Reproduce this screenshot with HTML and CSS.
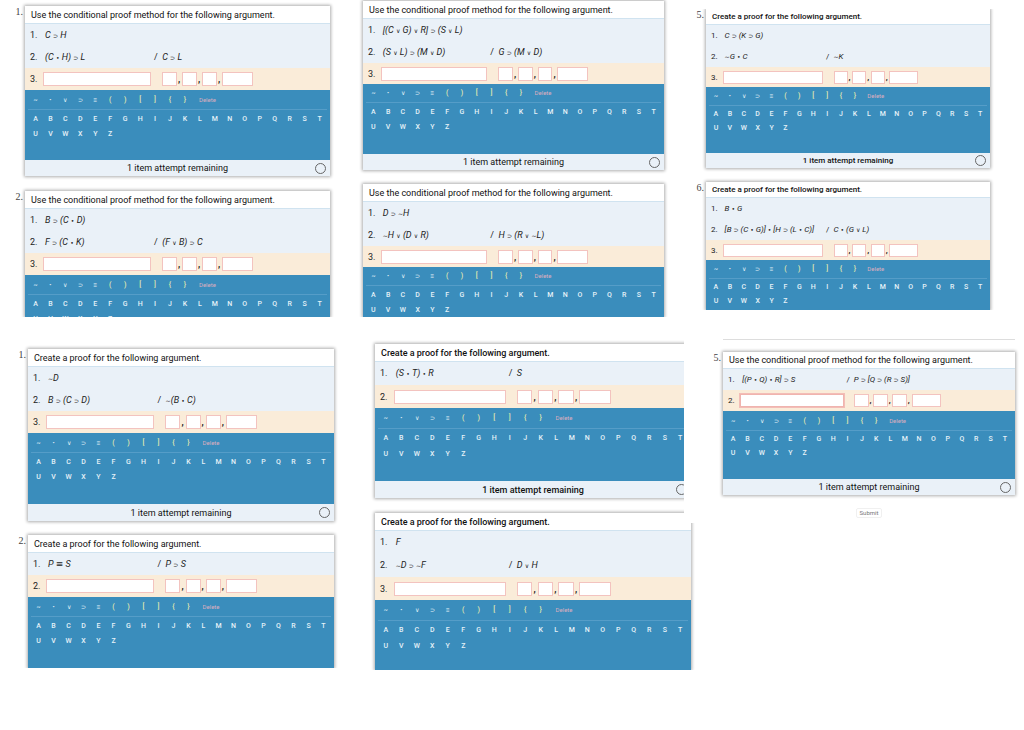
FILE: index.html
```html
<!DOCTYPE html>
<html lang="en">
<head>
    <meta charset="UTF-8">
    <meta name="viewport" content="width=device-width, initial-scale=1.0">
    <title>Natural Deduction Exercises</title>
    <link rel="stylesheet" href="styles.css">
</head>
<body>
    <section class="sheet sheet-top">
        <div class="column size-m col-a" data-column="a"></div>
        <div class="column size-m col-b" data-column="b"></div>
        <div class="column size-s col-c" data-column="c"></div>
    </section>

    <section class="sheet sheet-bottom">
        <div class="column size-m col-d" data-column="d"></div>
        <div class="column size-l col-e" data-column="e"></div>
        <div class="column size-n col-f" data-column="f">
            <div class="card-edge"></div>
        </div>
    </section>

    <script src="script.js"></script>
</body>
</html>
```

FILE: styles.css
```css
* {
    box-sizing: border-box;
}
body {
    margin: 0;
    background-color: #fff;
    color: #222;
    font-family: Roboto, "Liberation Sans", sans-serif;
    overflow-x: hidden;
}
button,
input {
    margin: 0;
    padding: 0;
    font-family: inherit;
}

/* Sheets and columns */
.sheet {
    display: grid;
    align-items: start;
}
.sheet-top {
    grid-template-columns: 330fr 334fr 326fr 34fr;
    padding-top: 1px;
}
.sheet-bottom {
    grid-template-columns: 334fr 357fr 324fr 9fr;
    margin-top: 22px;
}
.column {
    display: flex;
    flex-direction: column;
    gap: 14px;
    min-width: 0;
}
.size-s {
    --text: 8px;
    --title: 8px;
    --weight: 500;
    --head: 16px;
    --row: 21px;
    --entry: 20px;
    --field: 13px;
    --symbols: 19px;
    --key: 14px;
    --keypad: 66px;
    --foot: 15px;
}
.size-n {
    --text: 8px;
    --title: 9px;
    --weight: 400;
    --head: 17px;
    --row: 21px;
    --entry: 21px;
    --field: 13px;
    --symbols: 20px;
    --key: 14px;
    --keypad: 68px;
    --foot: 16px;
}
.size-m {
    --text: 9px;
    --title: 9px;
    --weight: 400;
    --head: 18px;
    --row: 22px;
    --entry: 22px;
    --field: 14px;
    --symbols: 20px;
    --key: 15px;
    --keypad: 70px;
    --foot: 16px;
}
.size-l {
    --text: 9px;
    --title: 9px;
    --weight: 500;
    --head: 18px;
    --row: 23px;
    --entry: 23px;
    --field: 14px;
    --symbols: 21px;
    --key: 16px;
    --keypad: 73px;
    --foot: 17px;
}
.col-a {
    --label: 25px;
    padding-top: 5px;
    gap: 15px;
}
.col-b {
    --label: 33px;
    --entry: 21px;
    --symbols: 19px;
}
.col-c {
    --label: 42px;
    padding-top: 8px;
}
.col-d {
    --label: 28px;
    --keypad: 71px;
    --foot: 17px;
    padding-top: 10px;
}
.col-e {
    --label: 41px;
    padding-top: 5px;
    gap: 15px;
}
.col-f {
    --label: 32px;
    gap: 12px;
}

/* Problem */
.problem {
    display: grid;
    grid-template-columns: var(--label) minmax(0, 1fr);
}
.label {
    padding-right: 2px;
    text-align: right;
    font: 10px/12px "Liberation Serif", serif;
    color: #444;
}
.card {
    box-shadow: 0 0 3px 1px rgba(0, 0, 0, 0.32);
    font-size: var(--text);
    background-color: #eaf1f8;
}
.card-title {
    height: var(--head);
    margin: 0;
    padding-left: 6px;
    border-bottom: 1px solid #d0e3f0;
    background-color: #fff;
    color: #111;
    font-size: var(--title);
    font-weight: var(--weight);
    line-height: var(--head);
    white-space: nowrap;
}
.card-edge {
    height: 1px;
    margin-left: var(--label);
    background-color: #ddd;
}

/* Proof lines */
.lines {
    margin: 0;
    padding: 0;
    list-style: none;
}
.line {
    display: grid;
    grid-template-columns: 20fr 109fr 176fr;
    height: var(--row);
    line-height: var(--row);
    white-space: nowrap;
}
.line > * {
    min-width: 0;
}
.number {
    padding-left: 5px;
}
.op {
    font-family: "DejaVu Sans", sans-serif;
    font-size: 6px;
}
.op-equiv {
    font-size: 9px;
}
.entry {
    display: grid;
    grid-template-columns: 18fr 108fr 11fr 15fr 5fr 15fr 5fr 15fr 5fr 31fr 77fr;
    align-items: center;
    height: var(--entry);
    background-color: #faecd9;
}
.entry > * {
    min-width: 0;
}
.field {
    width: 100%;
    height: var(--field);
    border: 1px solid #f3c3bf;
    border-radius: 0;
    background-color: #fff;
    font-size: var(--text);
    outline: none;
}
.field.active {
    border-color: #f0b4ae;
    box-shadow: 0 0 0 1px #f3bdb7;
}
.field.first {
    grid-column: 4;
}
.comma {
    padding-left: 1px;
    font-weight: 700;
}

/* Keypad */
.keypad {
    height: var(--keypad);
    padding: 0 3px;
    background-color: #3a8dbc;
}
.keys {
    display: grid;
    grid-template-columns: repeat(20, minmax(0, 1fr));
    grid-auto-rows: var(--key);
}
.symbols {
    grid-auto-rows: calc(var(--symbols) - 1px);
    border-bottom: 1px solid #559dc8;
    margin-bottom: 1px;
}
.key {
    border: none;
    background: none;
    color: #e6f2f8;
    font-size: 7px;
    font-weight: 500;
    line-height: 8px;
    text-align: center;
    cursor: pointer;
}
.key:hover {
    background-color: #2f7da9;
}
.symbol {
    font-size: 6px;
}
.bracket {
    color: #e6ecae;
}
.delete {
    grid-column: span 2;
    color: #dcaebf;
    font-size: 6px;
    font-weight: 400;
}

/* Footer */
.card-foot {
    display: grid;
    grid-template-columns: 20px 1fr 20px;
    align-items: center;
    height: var(--foot);
    color: #111;
    font-size: var(--title);
    font-weight: var(--weight);
    text-align: center;
}
.attempts {
    grid-column: 2;
}
.ring {
    width: 11px;
    height: 11px;
    margin-left: 5px;
    border: 1px solid #666;
    border-radius: 50%;
}
.submit {
    align-self: center;
    margin: 1px 0 0 var(--label);
    padding: 0 3px;
    border: 1px solid #f0f0f0;
    border-radius: 2px;
    background-color: #fff;
    color: #777;
    font-size: 6px;
    line-height: 8px;
    cursor: pointer;
}

/* Cards cut off by the edge of their sheet */
.cut-bottom {
    clip-path: inset(-4px -4px 0 -4px);
}
.cut-top {
    clip-path: inset(0 -4px -4px -4px);
}
.cut-right {
    clip-path: inset(-4px 7px -4px -4px);
}
.cut-corner {
    clip-path: polygon(-4px -4px, calc(100% - 7px) -4px, calc(100% - 7px) 10px, calc(100% + 4px) 10px, calc(100% + 4px) 100%, -4px 100%);
}
.cut-bottom .keypad,
.cut-corner .keypad {
    overflow: hidden;
}
.keys-42 {
    --keypad: 42px;
}
.keys-50 {
    --keypad: 50px;
}
.keys-70 {
    --keypad: 70px;
}
```

FILE: script.js
```js
const CONDITIONAL = "Use the conditional proof method for the following argument.";
const DIRECT = "Create a proof for the following argument.";
const SYMBOLS = ["~", "•", "∨", "⊃", "≡", "(", ")", "[", "]", "{", "}"];
const LETTERS = "ABCDEFGHIJKLMNOPQRSTUVWXYZ".split("");

const columns = {
    a: [
        { label: "1.", title: CONDITIONAL, premises: ["C ⊃ H", "(C • H) ⊃ L"], goal: "C ⊃ L", footer: true },
        { label: "2.", title: CONDITIONAL, premises: ["B ⊃ (C • D)", "F ⊃ (C • K)"], goal: "(F ∨ B) ⊃ C", cut: "cut-bottom keys-42" }
    ],
    b: [
        { title: CONDITIONAL, premises: ["[(C ∨ G) ∨ R] ⊃ (S ∨ L)", "(S ∨ L) ⊃ (M ∨ D)"], goal: "G ⊃ (M ∨ D)", footer: true },
        { title: CONDITIONAL, premises: ["D ⊃ ~H", "~H ∨ (D ∨ R)"], goal: "H ⊃ (R ∨ ~L)", cut: "cut-bottom keys-50" }
    ],
    c: [
        { label: "5.", title: DIRECT, premises: ["C ⊃ (K ⊃ G)", "~G • C"], goal: "~K", footer: true, cut: "cut-top" },
        { label: "6.", title: DIRECT, premises: ["B • G", "[B ⊃ (C • G)] • [H ⊃ (L • C)]"], goal: "C • (G ∨ L)", cut: "cut-bottom keys-50" }
    ],
    d: [
        { label: "1.", title: DIRECT, premises: ["~D", "B ⊃ (C ⊃ D)"], goal: "~(B • C)", footer: true },
        { label: "2.", title: DIRECT, premises: ["P ≡ S"], goal: "P ⊃ S", cut: "cut-bottom" }
    ],
    e: [
        { title: DIRECT, premises: ["(S • T) • R"], goal: "S", footer: true, cut: "cut-right" },
        { title: DIRECT, premises: ["F", "~D ⊃ ~F"], goal: "D ∨ H", cut: "cut-corner keys-70" }
    ],
    f: [
        { label: "5.", title: CONDITIONAL, premises: ["[(P • Q) • R] ⊃ S"], goal: "P ⊃ [Q ⊃ (R ⊃ S)]", footer: true, active: true, submit: true }
    ]
};

// Sentence letters are italic, operators use the symbol font
function formula(text) {
    return text
        .replace(/[A-Z()\[\]]+/g, m => `<i>${m}</i>`)
        .replace(/[~•∨⊃]/g, m => `<span class="op">${m}</span>`)
        .replace(/≡/g, m => `<span class="op op-equiv">${m}</span>`);
}

function lines(problem) {
    return problem.premises.map((premise, i) => {
        const last = i === problem.premises.length - 1;
        const goal = last ? `<span class="formula">/&nbsp; ${formula(problem.goal)}</span>` : "";
        return `<li class="line"><span class="number">${i + 1}.</span><span class="formula">${formula(premise)}</span>${goal}</li>`;
    }).join("");
}

function entry(problem, id) {
    const comma = '<span class="comma">,</span>';
    return `<div class="entry">
        <label class="number" for="${id}">${problem.premises.length + 1}.</label>
        <input class="field${problem.active ? " active" : ""}" id="${id}" type="text">
        <input class="field first" type="text" aria-label="First line">${comma}
        <input class="field" type="text" aria-label="Second line">${comma}
        <input class="field" type="text" aria-label="Third line">${comma}
        <input class="field" type="text" aria-label="Rule">
    </div>`;
}

function keypad() {
    const symbols = SYMBOLS.map((s, i) => `<button type="button" class="key ${i > 4 ? "bracket" : "symbol"}">${s}</button>`).join("");
    const letters = LETTERS.map(l => `<button type="button" class="key">${l}</button>`).join("");
    return `<div class="keypad">
        <div class="keys symbols">${symbols}<button type="button" class="key delete">Delete</button></div>
        <div class="keys">${letters}</div>
    </div>`;
}

function card(problem, id) {
    const footer = problem.footer
        ? '<footer class="card-foot"><span class="attempts">1 item attempt remaining</span><span class="ring"></span></footer>'
        : "";
    return `<div class="problem">
        <span class="label">${problem.label || ""}</span>
        <article class="card ${problem.cut || ""}">
            <h2 class="card-title">${problem.title}</h2>
            <ol class="lines">${lines(problem)}</ol>
            ${entry(problem, id)}${keypad()}${footer}
        </article>
    </div>`;
}

document.querySelectorAll("[data-column]").forEach(column => {
    const name = column.dataset.column;
    columns[name].forEach((problem, i) => {
        column.insertAdjacentHTML("beforeend", card(problem, `proof-${name}${i + 1}`));
        if (problem.submit) {
            column.insertAdjacentHTML("beforeend", '<button type="button" class="submit">Submit</button>');
        }
    });
});

// Keys type into the proof field of their own card
document.querySelectorAll(".key").forEach(key => {
    key.addEventListener("click", () => {
        const field = key.closest(".card").querySelector(".field");
        if (key.classList.contains("delete")) {
            field.value = field.value.slice(0, -1);
        } else {
            field.value += key.textContent;
        }
    });
});
```
